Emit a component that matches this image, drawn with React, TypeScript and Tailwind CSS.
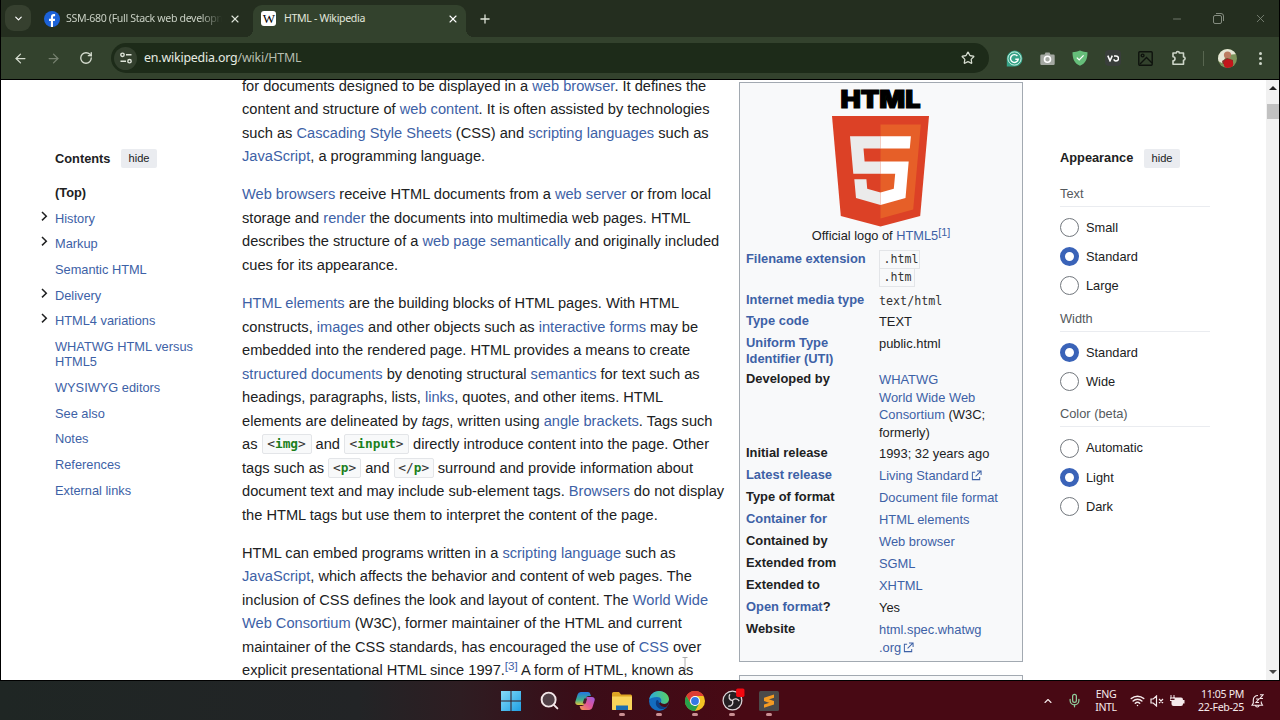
import React from 'react';
import { ChevronDown, ChevronUp, X, Plus, ArrowLeft, ArrowRight, RotateCw, Star, Mic, Wifi, Search, Minus } from 'lucide-react';

const A: React.FC<{ children: React.ReactNode }> = ({ children }) => (
  <span className="text-[#3d61a6]">{children}</span>
);

const Tag: React.FC<{ name: string; close?: boolean; width: string }> = ({ name, close, width }) => (
  <code className={`relative -top-px inline-flex h-[20px] items-center justify-center rounded-[2px] border border-[#e3e5e8] bg-[#f8f9fa] align-middle font-['DejaVu_Sans_Mono','Noto_Sans',monospace] text-[12.8px] leading-[18px] text-[#333] ${width}`}>
    {close ? '</' : '<'}
    <b className="font-bold text-[#1b7f1b]">{name}</b>
    {'>'}
  </code>
);

const External = () => (
  <svg className="ml-[2px] inline-block h-[11px] w-[11px] align-[-1px]" viewBox="0 0 12 12" fill="none" stroke="#3d61a6" strokeWidth="1.1">
    <path d="M4.5 2.5H1.5v8h8v-3M6.5 1h4.5v4.5M11 1 5 7" />
  </svg>
);

const paragraphs: React.ReactNode[][] = [
  [
    <>for documents designed to be displayed in a <A>web browser</A>. It defines the</>,
    <>content and structure of <A>web content</A>. It is often assisted by technologies</>,
    <>such as <A>Cascading Style Sheets</A> (CSS) and <A>scripting languages</A> such as</>,
    <><A>JavaScript</A>, a programming language.</>,
  ],
  [
    <><A>Web browsers</A> receive HTML documents from a <A>web server</A> or from local</>,
    <>storage and <A>render</A> the documents into multimedia web pages. HTML</>,
    <>describes the structure of a <A>web page</A> <A>semantically</A> and originally included</>,
    <>cues for its appearance.</>,
  ],
  [
    <><A>HTML elements</A> are the building blocks of HTML pages. With HTML</>,
    <>constructs, <A>images</A> and other objects such as <A>interactive forms</A> may be</>,
    <>embedded into the rendered page. HTML provides a means to create</>,
    <><A>structured documents</A> by denoting structural <A>semantics</A> for text such as</>,
    <>headings, paragraphs, lists, <A>links</A>, quotes, and other items. HTML</>,
    <>elements are delineated by <i>tags</i>, written using <A>angle brackets</A>. Tags such</>,
    <>as <Tag name="img" width="w-[50px]" /> and <Tag name="input" width="w-[65px]" /> directly introduce content into the page. Other</>,
    <>tags such as <Tag name="p" width="w-[33px]" /> and <Tag name="p" close width="w-[40px]" /> surround and provide information about</>,
    <>document text and may include sub-element tags. <A>Browsers</A> do not display</>,
    <>the HTML tags but use them to interpret the content of the page.</>,
  ],
  [
    <>HTML can embed programs written in a <A>scripting language</A> such as</>,
    <><A>JavaScript</A>, which affects the behavior and content of web pages. The</>,
    <>inclusion of CSS defines the look and layout of content. The <A>World Wide</A></>,
    <><A>Web Consortium</A> (W3C), former maintainer of the HTML and current</>,
    <>maintainer of the CSS standards, has encouraged the use of <A>CSS</A> over</>,
    <>explicit presentational HTML since 1997.<span className="relative -top-[5px] text-[11.7px]"><A>[3]</A></span> A form of HTML, known as</>,
  ],
];

const contents = [
  { label: 'History', arrow: true },
  { label: 'Markup', arrow: true },
  { label: 'Semantic HTML' },
  { label: 'Delivery', arrow: true },
  { label: 'HTML4 variations', arrow: true },
  { label: 'WHATWG HTML versus HTML5' },
  { label: 'WYSIWYG editors' },
  { label: 'See also' },
  { label: 'Notes' },
  { label: 'References' },
  { label: 'External links' },
];

const facts: { label: React.ReactNode; value: React.ReactNode; height: string }[] = [
  {
    label: <A>Filename extension</A>,
    value: (
      <div className="-mt-px flex flex-col items-start font-['DejaVu_Sans_Mono',monospace] text-[11.6px] leading-[17px] text-[#333]">
        <span className="border border-[#e3e5e8] pl-[3.5px] pr-px">.html</span>
        <span className="-mt-px border border-[#e3e5e8] pl-[3.5px] pr-[3px]">.htm</span>
      </div>
    ),
    height: 'h-[41px]',
  },
  { label: <A>Internet media type</A>, value: <span className="font-['DejaVu_Sans_Mono',monospace] text-[11.7px] text-[#333]">text/html</span>, height: 'h-[21.5px]' },
  { label: <A>Type code</A>, value: 'TEXT', height: 'h-[21.8px]' },
  { label: <A>Uniform Type<br />Identifier (UTI)</A>, value: 'public.html', height: 'h-[36px]' },
  { label: 'Developed by', value: <><A>WHATWG<br />World Wide Web<br />Consortium</A> (W3C;<br />formerly)</>, height: 'h-[74px]' },
  { label: 'Initial release', value: '1993; 32 years ago', height: 'h-[22px]' },
  { label: <A>Latest release</A>, value: <><A>Living Standard</A><External /></>, height: 'h-[22px]' },
  { label: 'Type of format', value: <A>Document file format</A>, height: 'h-[22px]' },
  { label: <A>Container for</A>, value: <A>HTML elements</A>, height: 'h-[22px]' },
  { label: 'Contained by', value: <A>Web browser</A>, height: 'h-[22px]' },
  { label: 'Extended from', value: <A>SGML</A>, height: 'h-[22px]' },
  { label: 'Extended to', value: <A>XHTML</A>, height: 'h-[22px]' },
  { label: <><A>Open format</A>?</>, value: 'Yes', height: 'h-[22px]' },
  { label: 'Website', value: <><A>html.spec.whatwg<br />.org</A><External /></>, height: 'h-[42px]' },
];

const appearance = [
  { title: 'Text', options: ['Small', 'Standard', 'Large'], selected: 'Standard' },
  { title: 'Width', options: ['Standard', 'Wide'], selected: 'Standard' },
  { title: 'Color (beta)', options: ['Automatic', 'Light', 'Dark'], selected: 'Light' },
];

const TabStrip = () => (
  <div className="flex h-[37px] items-stretch bg-[#242e1f] font-['Noto_Sans',sans-serif] text-[10.6px] tracking-[-0.34px] text-[#c9d0c4]">
    <div className="ml-[4px] mt-[5px] flex h-[26px] w-[26px] items-center justify-center rounded-[9px] bg-[#36402f]">
      <ChevronDown className="h-[11px] w-[11px] text-white" strokeWidth={2.6} />
    </div>
    <div className="ml-[13px] flex w-[209px] items-center">
      <svg className="h-4 w-4 shrink-0" viewBox="0 0 16 16">
        <circle cx="8" cy="8" r="8" fill="#1c62d8" />
        <path d="M6.9 16V10H5V7.8h1.9V6.2c0-2 1.100-3.100 2.900-3.100.8 0 1.300.1 1.300.1v2h-.9c-1 0-1.200.5-1.200 1.200v1.400h2.100L10.800 10H9v6z" fill="#fff" />
      </svg>
      <span className="ml-[6px] w-[156px] shrink-0 whitespace-nowrap [mask-image:linear-gradient(90deg,#000_86%,transparent)]">
        SSM-680 (Full Stack web developn
      </span>
      <X className="ml-[7px] h-3 w-3 shrink-0 text-[#dfe5da]" strokeWidth={2.2} />
    </div>
    <div className="relative mt-[5px] flex w-[213px] items-center rounded-t-[9px] bg-[#33422d] pb-[5px] pl-[8px]">
      <div className="absolute bottom-0 -left-[8px] h-2 w-2 bg-[radial-gradient(circle_at_0_0,#242e1f_8px,#33422d_8px)]" />
      <div className="absolute bottom-0 -right-[8px] h-2 w-2 bg-[radial-gradient(circle_at_100%_0,#242e1f_8px,#33422d_8px)]" />
      <div className="flex h-[15px] w-[15px] items-center justify-center rounded-[3px] bg-white">
        <span className="font-['Liberation_Serif',serif] text-[13px] leading-none tracking-tighter text-black">W</span>
      </div>
      <span className="ml-[8px] w-[160px] text-[#e1e7dc]">HTML - Wikipedia</span>
      <X className="ml-[3px] h-3 w-3 text-white" strokeWidth={2.2} />
    </div>
    <Plus className="ml-[12px] mt-[12px] h-[14px] w-[14px] text-[#e1e7dc]" strokeWidth={2.2} />
    <div className="ml-auto mr-[12px] flex items-center gap-[30px] text-[#848c7f]">
      <Minus className="h-3 w-3" strokeWidth={1.6} />
      <svg className="h-[11px] w-[11px]" viewBox="0 0 11 11" fill="none" stroke="currentColor">
        <rect x="0.500" y="2.500" width="8" height="8" rx="1.500" />
        <path d="M3 .5h5a2.500 2.500 0 0 1 2.500 2.500v5" />
      </svg>
      <X className="h-[13px] w-[13px]" strokeWidth={1.5} />
    </div>
  </div>
);

const Extensions = () => (
  <div className="ml-[17px] flex items-center">
    <svg className="h-[17px] w-[17px]" viewBox="0 0 17 17">
      <path d="M8.500 .5a8 8 0 1 1 0 16H.8V8.500a8 8 0 0 1 7.700-8z" fill="#35a287" />
      <circle cx="8.500" cy="8.500" r="6.600" fill="none" stroke="#c7efe1" />
      <path d="M11.400 6A3.900 3.900 0 1 0 12.300 9.200H9.300" fill="none" stroke="#fff" strokeWidth="1.400" />
    </svg>
    <svg className="ml-[17px] h-[13px] w-[15px]" viewBox="0 0 15 13">
      <path d="M1.500 2.500h3L5.500.5h4l1 2h3a1.200 1.200 0 0 1 1.200 1.200v8a1.200 1.200 0 0 1-1.200 1.200h-12a1.200 1.200 0 0 1-1.200-1.200v-8a1.200 1.200 0 0 1 1.200-1.200z" fill="#a4a8a2" />
      <circle cx="7.500" cy="7.300" r="3" fill="none" stroke="#fff" strokeWidth="1.600" />
    </svg>
    <svg className="ml-[17px] h-[16px] w-[16px]" viewBox="0 0 16 16">
      <path d="M8 .5c3 1.200 5 1.500 7.500 1.700C15.500 9 13.500 13.500 8 15.700 2.500 13.500.5 9 .5 2.200 3 2 5 1.700 8 .5z" fill="#66be7a" />
      <path d="m4.800 7.600 2.400 2.300 4.400-4.500" fill="none" stroke="#fff" strokeWidth="1.300" />
    </svg>
    <div className="ml-[17px] flex h-[16px] w-[16px] items-center justify-center rounded-[4px] bg-[#393e3b]">
      <svg className="h-[7px] w-[12px]" viewBox="0 0 12 7" fill="none" stroke="#fff" strokeWidth="1.500">
        <path d="M.8.6 3 5.800 5.300.6M7 1h2a2.300 2.300 0 0 1 0 5C7.800 6 7 5.500 7 4.300" />
      </svg>
    </div>
    <svg className="ml-[17px] h-[15px] w-[15px]" viewBox="0 0 15 15" fill="none" stroke="#0e120d" strokeWidth="1.400">
      <rect x=".8" y=".8" width="13.400" height="13.400" rx="1" />
      <circle cx="4.600" cy="4.500" r="1.400" />
      <path d="m2 13 6.500-6.500L14 12" />
    </svg>
    <svg className="ml-[18px] h-[16px] w-[16px]" viewBox="0 0 16 16" fill="none" stroke="#cdd5c8" strokeWidth="1.600" strokeLinejoin="round">
      <path d="M2 3h3.300a1.500 1.500 0 0 1 3 0h4.200v4a1.600 1.600 0 0 1 0 3.200v4H2v-3.400a2 2 0 0 0 0-4z" />
    </svg>
    <div className="ml-[16px] h-[15px] w-px bg-[#586650]" />
    <div className="ml-[14px] h-[19px] w-[19px] overflow-hidden rounded-full">
      <svg className="h-full w-full" viewBox="0 0 19 19">
        <rect width="19" height="19" fill="#7e945b" />
        <path d="M0 0h19v5L9 6 4 14 0 12z" fill="#e6e6d6" />
        <circle cx="9.500" cy="6" r="3.600" fill="#bb7c62" />
        <path d="m4 12 5-3 6 2v4H5z" fill="#8b302b" />
        <circle cx="10.500" cy="15" r="4.800" fill="#c3151b" />
      </svg>
    </div>
    <div className="ml-[22px] flex flex-col gap-[2px]">
      <i className="h-[3px] w-[3px] rounded-full bg-[#cdd5c8]" />
      <i className="h-[3px] w-[3px] rounded-full bg-[#cdd5c8]" />
      <i className="h-[3px] w-[3px] rounded-full bg-[#cdd5c8]" />
    </div>
  </div>
);

const Toolbar = () => (
  <div className="flex h-[42px] items-center bg-[#33422d]">
    <ArrowLeft className="ml-[12px] h-[15px] w-[15px] text-[#d5dccf]" strokeWidth={2} />
    <ArrowRight className="ml-[18px] h-[15px] w-[15px] text-[#76806f]" strokeWidth={2} />
    <RotateCw className="ml-[18px] h-[14px] w-[14px] text-[#d5dccf]" strokeWidth={2.3} />
    <div className="ml-[18px] flex h-[30px] w-[878px] items-center rounded-full bg-[#1d2b19]">
      <div className="ml-[3px] flex h-[23px] w-[23px] items-center justify-center rounded-full bg-[#33402e]">
        <svg className="h-3 w-3" viewBox="0 0 12 12" fill="none" stroke="#dfe5da" strokeWidth="1.400">
          <circle cx="2.500" cy="2.800" r="1.700" />
          <path d="M6 2.800h5.500M.5 9.200H6" />
          <circle cx="9.500" cy="9.200" r="1.700" />
        </svg>
      </div>
      <span className="ml-[7px] font-['Noto_Sans',sans-serif] text-[12.400px] tracking-[-0.190px] text-[#e6ebe2]">
        en.wikipedia.org<span className="text-[#b6beb0]">/wiki/HTML</span>
      </span>
      <Star className="ml-auto mr-[14px] h-[14px] w-[14px] text-[#d5dccf]" strokeWidth={2.2} />
    </div>
    <Extensions />
  </div>
);

const HideButton = () => (
  <span className="flex h-[19px] w-[36px] items-center justify-center rounded-[2px] bg-[#eaecf0] text-[11.1px] text-[#202122]">hide</span>
);

const ContentsPanel = () => (
  <nav className="w-[241px] shrink-0 pl-[40px] pt-[68.500px] text-[12.8px] leading-[15px]">
    <div className="flex h-[19px] items-center gap-[11px] pl-[14px]">
      <b className="w-[55px] text-[12.8px]">Contents</b>
      <HideButton />
    </div>
    <div className="mt-[17.500px] mb-[10.500px] pl-[14px] font-bold">(Top)</div>
    {contents.map((item) => (
      <div key={item.label} className="mb-[10.720px] flex">
        <span className="w-[14px] shrink-0">
          {item.arrow && (
            <svg className="h-[11px] w-[7px]" viewBox="0 0 7 11" fill="none" stroke="#202122" strokeWidth="1.500">
              <path d="m1 1 4.300 4.200L1 9.400" />
            </svg>
          )}
        </span>
        <span className="w-[150px] text-[#3d61a6]">{item.label}</span>
      </div>
    ))}
  </nav>
);

const Article = () => (
  <main className="relative -mt-[5.500px] w-[497px] shrink-0 text-[14.640px] leading-[23.520px]">
    {paragraphs.map((lines, p) => (
      <div key={p} className="mb-[14.700px]">
        {lines.map((line, i) => (
          <div key={i} className="h-[23.520px] whitespace-nowrap">{line}</div>
        ))}
      </div>
    ))}
    {/* text cursor */}
    <svg className="absolute left-[440px] top-[582px] h-[13px] w-[6px]" viewBox="0 0 6 13" fill="none" stroke="#999" strokeWidth="0.800">
      <path d="M.5.5h5M3 .5v12M.5 12.500h5" />
    </svg>
  </main>
);

const Html5Logo = () => (
  <svg className="mx-auto block h-[138px] w-[98px]" viewBox="0 0 98 138">
    <text x="48.500" y="19" textAnchor="middle" textLength="80" lengthAdjust="spacingAndGlyphs" className="font-[Inter,sans-serif] text-[25px] font-black" stroke="#000" strokeWidth="1.200">HTML</text>
    <path d="M0 27h97l-8.800 100L48.500 137.500 8.800 127z" fill="#dc4126" />
    <path d="M48.500 35.500h40.300L81.200 120.500 48.500 129.500z" fill="#e65f28" />
    <path d="M48.500 47.300H18l3.300 37.400h27.200V72.500H32.600l-1.100-13h17zM48.500 103.500l-13.300-3.700-.8-9.600H22.300l1.700 18.900L48.500 116z" fill="#ebebeb" />
    <path d="M48.500 47.300h30.400l-1.100 12.200H48.500zM48.500 72.500h28.200l-3.200 36.600L48.500 116v-12.500l13.300-3.700 1.400-15.100H48.500z" fill="#fff" />
  </svg>
);

const Infobox = () => (
  <aside className="w-[284px] shrink-0 pt-[2px] text-[12.900px]">
    <div className="h-[580px] border border-[#a2a9b1] bg-[#f8f9fa] pt-[6px]">
      <Html5Logo />
      <div className="h-[20px] text-center text-[12.800px] leading-[18px]">
        Official logo of <A>HTML5<span className="relative -top-[4px] text-[10.800px]">[1]</span></A>
      </div>
      <div className="pl-[6px] pt-[3px]">
        {facts.map((fact, i) => (
          <div key={i} className={`flex ${fact.height}`}>
            <div className="w-[133px] shrink-0 whitespace-nowrap pt-[0.500px] font-bold leading-[16px]">{fact.label}</div>
            <div className="whitespace-nowrap pt-[0.900px] leading-[17.500px]">{fact.value}</div>
          </div>
        ))}
      </div>
    </div>
    <div className="mt-[13px] h-[20px] border border-[#a2a9b1] bg-[#f8f9fa]" />
  </aside>
);

const AppearancePanel = () => (
  <aside className="ml-[37px] w-[206px] shrink-0 pt-[68.500px] text-[12.800px]">
    <div className="flex h-[19px] items-center">
      <b className="w-[84px]">Appearance</b>
      <HideButton />
    </div>
    <div className="pt-[16px]">
      {appearance.map((group) => (
        <div key={group.title} className="mb-[8.200px]">
          <div className="mb-[6px] h-[23px] w-[150px] border-b border-[#eaecf0] leading-[19px] text-[#54595d]">{group.title}</div>
          {group.options.map((option) => (
            <div key={option} className="flex h-[29.300px] items-center gap-[7px]">
              <span
                className={`h-[19px] w-[19px] rounded-full bg-white ${
                  option === group.selected ? 'border-[5.500px] border-[#3a63b8]' : 'border border-[#72777d]'
                }`}
              />
              {option}
            </div>
          ))}
        </div>
      ))}
    </div>
  </aside>
);

const Scrollbar = () => (
  <div className="ml-auto flex w-[13px] shrink-0 flex-col items-center bg-[#f1f1f1]">
    <div className="mt-[6px] border-x-[4px] border-b-[4px] border-x-transparent border-b-[#222]" />
    <div className="mt-[14px] h-[15px] w-[12px] bg-[#c1c1c1]" />
    <div className="mb-[6px] mt-auto border-x-[4px] border-t-[4px] border-x-transparent border-t-[#444]" />
  </div>
);

const TaskbarIcon: React.FC<{ children: React.ReactNode; running?: boolean }> = ({ children, running }) => (
  <div className="relative flex h-[39px] w-[36.800px] items-center justify-center">
    {children}
    {running && <span className="absolute bottom-[4px] h-[3px] w-[6px] rounded-full bg-[#c98f93]" />}
  </div>
);

const Taskbar = () => (
  <div className="relative flex h-[39px] bg-[linear-gradient(90deg,#1f2624_0%,#222426_28%,#2e1d22_36%,#3a0d18_45%,#480914_58%,#480914_100%)]">
    <div className="ml-[493px] flex">
      <TaskbarIcon>
        <svg className="h-5 w-5" viewBox="0 0 20 20">
          <defs>
            <linearGradient id="win" x1="0" y1="0" x2="1" y2="1">
              <stop stopColor="#86dcf8" />
              <stop offset="1" stopColor="#1e9fe4" />
            </linearGradient>
          </defs>
          <path d="M0 0h9.500v9.500H0zM10.500 0H20v9.500h-9.500zM0 10.500h9.500V20H0zM10.500 10.500H20V20h-9.500z" fill="url(#win)" />
        </svg>
      </TaskbarIcon>
      <TaskbarIcon>
        <Search className="ml-[2px] h-[21px] w-[21px] fill-[#514047] text-[#f2e6e8]" strokeWidth={2.2} />
      </TaskbarIcon>
      <TaskbarIcon>
        <svg className="ml-px h-[18px] w-5" viewBox="0 0 20 18">
          <defs>
            <linearGradient id="cp1" x1="0" y1="0" x2="0" y2="1">
              <stop stopColor="#2477e0" />
              <stop offset="0.600" stopColor="#3cae8d" />
              <stop offset="1" stopColor="#e9c33b" />
            </linearGradient>
            <linearGradient id="cp2" x1="1" y1="0" x2="0" y2="1">
              <stop stopColor="#9a5be0" />
              <stop offset="0.500" stopColor="#e0559a" />
              <stop offset="1" stopColor="#f59a4b" />
            </linearGradient>
          </defs>
          <path d="M6 0h7a2.500 2.500 0 0 1 2.300 2l.6 2h-2.200a3 3 0 0 0-2.800 2.100L8.700 13H3c-2 0-3.200-1.500-2.600-3.600L2.600 2.500A3.500 3.500 0 0 1 6 0z" fill="url(#cp1)" />
          <path d="M14 18H7.500a2.500 2.500 0 0 1-2.300-2l-.6-2h2a3 3 0 0 0 2.800-2.100L11.500 5H17c2 0 3.200 1.500 2.600 3.600l-2.200 6.900A3.500 3.500 0 0 1 14 18z" fill="url(#cp2)" />
          <path d="M9.200 6.500h3l-1.500 5h-3z" fill="#46202c" />
        </svg>
      </TaskbarIcon>
      <TaskbarIcon running>
        <svg className="h-[18px] w-5" viewBox="0 0 20 18">
          <path d="M0 1.500A1.500 1.500 0 0 1 1.500 0H7l2 2.500h9.500A1.500 1.500 0 0 1 20 4v14H0z" fill="#dfa524" />
          <path d="M0 4.500h20V16.500A1.500 1.500 0 0 1 18.500 18h-17A1.500 1.500 0 0 1 0 16.500z" fill="#fad45b" />
          <path d="M4 13.500h12V18H4z" fill="#1d6eb1" />
        </svg>
      </TaskbarIcon>
      <TaskbarIcon running>
        <svg className="h-5 w-5" viewBox="0 0 20 20">
          <defs>
            <linearGradient id="eg" x1="0" y1="0.500" x2="1" y2="0.300">
              <stop stopColor="#2aa9e2" />
              <stop offset="1" stopColor="#5bd05f" />
            </linearGradient>
          </defs>
          <circle cx="10" cy="10" r="10" fill="#146dbf" />
          <path d="M.2 8.500C1 3.500 5 0 10 0c5.500 0 10 3.800 10 8.300 0 3-2.300 4.700-4.800 4.700-2.200 0-3.600-.8-3.200-1.700.8-1.700.5-5.300-4-5.300-3.500 0-6.500 1-7.800 2.500z" fill="url(#eg)" />
          <path d="M7.500 9.500C5.500 13 8 17.500 12.500 18c2.500.2 4.500-1 5.500-2.600-3 1.300-7.300.3-8-3.400C9.800 9.500 8.500 8.500 7.500 9.500z" fill="#0c3f84" />
          <path d="M12 11.300c-.4.900 1 1.700 3.200 1.700 2.300 0 4.300-1.400 4.700-3.800.3 2.600-.4 4.600-1.900 6.200-3 1.300-7.300.3-8-3.400z" fill="#460d18" />
        </svg>
      </TaskbarIcon>
      <TaskbarIcon running>
        <svg className="h-5 w-5" viewBox="0 0 20 20">
          <circle cx="10" cy="10" r="10" fill="#f3c324" />
          <path d="M1.300 5A10 10 0 0 1 18.700 5H10L5.700 12.500z" fill="#dc3d33" />
          <path d="M1.300 5A10 10 0 0 0 10 20l4.300-7.500L10 15l-4.300-2.500z" fill="#28a04b" />
          <circle cx="10" cy="10" r="5" fill="#fff" />
          <circle cx="10" cy="10" r="3.900" fill="#3477e3" />
        </svg>
      </TaskbarIcon>
      <TaskbarIcon running>
        <svg className="mb-[2px] ml-[2px] h-[23px] w-[23px]" viewBox="0 0 22 22">
          <circle cx="10" cy="12" r="9" fill="#241f22" stroke="#ddd5d7" strokeWidth="1.200" />
          <path d="M10 12c-3-.5-4.200-3-2.500-6M10 12c2-2.500 5-2 6.500.5M10 12c1 3-.5 5.500-4 5.500" fill="none" stroke="#ddd5d7" strokeWidth="1.300" />
          <rect x="13.500" y="0.500" width="8" height="8" rx="1.500" fill="#f20810" />
        </svg>
      </TaskbarIcon>
      <TaskbarIcon running>
        <svg className="h-5 w-5" viewBox="0 0 20 20">
          <rect width="20" height="20" rx="1.500" fill="#4b4a4a" />
          <path d="m15 3.500-10 3.200V10l10-3.200zM5 6.700V10l10 3.500v-3.400zM15 10.200 5 13.500v3.200l10-3.200z" fill="#f59b22" />
        </svg>
      </TaskbarIcon>
    </div>
    <div className="ml-auto flex items-center font-['Noto_Sans',sans-serif] text-[10.600px] leading-[13px] text-[#f5e9eb]">
      <ChevronUp className="h-3 w-3" strokeWidth={2.200} />
      <Mic className="ml-[13px] h-[15px] w-[15px] text-[#8fcb9b]" strokeWidth={2} />
      <div className="ml-[13px] w-[22px] text-center tracking-[-0.400px]">ENG<br />INTL</div>
      <Wifi className="ml-[13px] h-[15px] w-[15px]" strokeWidth={2.400} />
      <svg className="ml-[5px] h-[12px] w-[14px]" viewBox="0 0 14 12" fill="none" stroke="currentColor" strokeWidth="1.200">
        <path d="M1 4h2.200L6.500 1v10L3.200 8H1zM9 4l4 4M13 4 9 8" />
      </svg>
      <svg className="ml-[6px] h-[12px] w-[15px]" viewBox="0 0 15 12">
        <rect x="1.500" y="2.500" width="11.500" height="8.500" rx="2" fill="#f5e9eb" />
        <path d="M13 5h1.500v3.500H13z" fill="#f5e9eb" />
        <path d="M1 0v3.500M4 0v3.500M0 3h5v2.500H0z" stroke="#f5e9eb" fill="#480914" />
      </svg>
      <div className="ml-[10px] w-[49px] whitespace-nowrap text-right tracking-[-0.350px]">11:05 PM<br />22-Feb-25</div>
      <svg className="ml-[7px] mr-[16px] h-[14px] w-[13px]" viewBox="0 0 13 14" fill="none" stroke="currentColor" strokeWidth="1.100">
        <path d="M7 1.500C4 1.500 2.300 3.500 2.300 6v3L1 11.300h10.500L10.300 9V7.500M4.500 11.500c.3 2 3.300 2 3.600 0M5 5h3L5 8.500h3M9 .8h3L9 4.500h3" />
      </svg>
    </div>
  </div>
);

const App: React.FC = () => (
  <div className="flex h-[720px] w-[1280px] flex-col overflow-hidden bg-black">
    <div className="mx-px mb-px flex h-[680px] shrink-0 flex-col">
      <TabStrip />
      <Toolbar />
      <div className="mt-px flex h-[600px] overflow-hidden bg-white font-['Liberation_Sans',Arial,sans-serif] text-[#202122]">
        <ContentsPanel />
        <Article />
        <Infobox />
        <AppearancePanel />
        <Scrollbar />
      </div>
    </div>
    <Taskbar />
  </div>
);

export default App;
